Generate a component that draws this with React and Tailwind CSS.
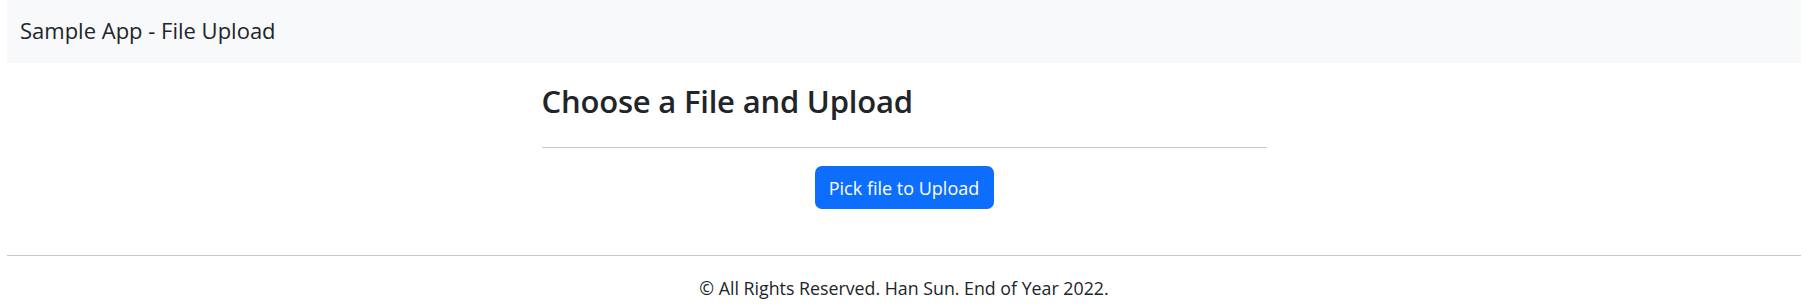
export default function App() {
  return (
    <div className="w-[1811px] h-[308px] bg-white pl-[7px] pr-[10px] text-[#212529]" style={{ fontFamily: '"Open Sans", "Noto Sans", sans-serif' }}>
      <nav className="h-[63px] bg-[#f8f9fa] flex items-center pl-[13px]">
        <span className="text-[22px] leading-none pb-[3px]">Sample App - File Upload</span>
      </nav>
      <main className="w-[725px] mx-auto pt-[18px]">
        <h2 className="text-[31px] font-semibold leading-[40px] tracking-[-0.2px]">Choose a File and Upload</h2>
        <hr className="mt-[26px] border-0 border-t border-[#c8c9ca]" />
        <div className="flex justify-center pt-[18px]">
          <button className="h-[43px] w-[179px] rounded-[7px] bg-[#0d6efd] text-white text-[18px] leading-none">
            Pick file to Upload
          </button>
        </div>
      </main>
      <footer className="mt-[46px]">
        <hr className="border-0 border-t border-[#c8c9ca]" />
        <p className="text-center text-[17.8px] leading-none pt-[24px]">© All Rights Reserved. Han Sun. End of Year 2022.</p>
      </footer>
    </div>
  );
}
